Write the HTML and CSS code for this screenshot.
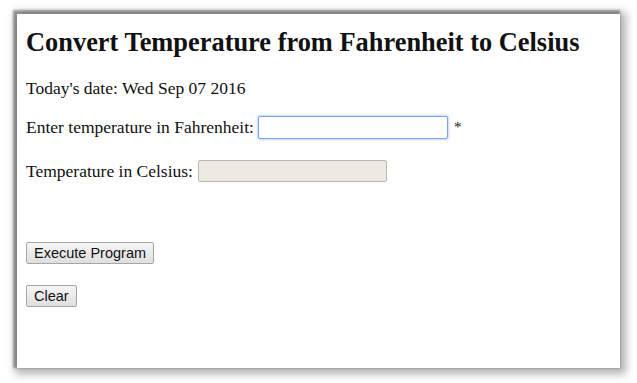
FILE: index.html
```html
<!DOCTYPE html>
<html lang="en">
<head>
  <meta charset="UTF-8" />
  <title>Convert Temperature</title>
  <link rel="stylesheet" href="styles.css">
</head>
<body>
<div class="frame">
  <div class="card">
    <h2>Convert Temperature from Fahrenheit to Celsius</h2>

    <p class="date">Today's date: <span id="fecha">Wed Sep 07 2016</span></p>

    <div class="row">
      <label for="fahrenheit">Enter temperature in Fahrenheit:</label>
      <input type="text" id="fahrenheit" class="entrada activa">
      <span class="req">*</span>
    </div>

    <div class="row row-celsius">
      <label for="celsius">Temperature in Celsius:</label>
      <input type="text" id="celsius" class="entrada" disabled>
    </div>

    <div class="botones">
      <button class="btn">Execute Program</button>
      <button class="btn">Clear</button>
    </div>
  </div>
</div>
</body>
</html>
```

FILE: styles.css
```css
body {
  margin: 0;
  background: #ffffff;
  font-family: "Liberation Serif", "Times New Roman", serif;
  font-size: 17.5px;
  color: #111;
}

.frame {
  padding: 14px 17px 15px 17px;
}

.card {
  height: 354px;
  padding: 0 9px;
  background: #ffffff;
  box-shadow: -2px -2px 2px 2px rgba(0,0,0,0.35), 2px 2px 8px 4px rgba(0,0,0,0.3);
  overflow: hidden;
}

h2 {
  margin: 13px 0 0;
  font-size: 26.4px;
  line-height: 30px;
  font-weight: bold;
}

.date {
  margin: 21px 0 0;
  line-height: 20px;
}

.row {
  display: flex;
  align-items: center;
  margin-top: 18px;
}

.row-celsius {
  margin-top: 21px;
}

.row label {
  margin-right: 4px;
}

.row-celsius label {
  margin-right: 5px;
}

.entrada {
  box-sizing: border-box;
  width: 190px;
  height: 23px;
  margin: 0;
  padding: 2px 4px;
  border: 1px solid #a9a9a9;
  border-radius: 2px;
  background: #fff;
  font-size: 14px;
}

.entrada.activa {
  border-color: #7ea3e6;
  box-shadow: 0 0 2px 1px rgba(126,163,230,0.45);
  outline: none;
}

.entrada:disabled {
  height: 22px;
  width: 189px;
  background: #ebebe4;
  border-color: #b8b8b0;
}

.req {
  margin-left: 6px;
  font-size: 15px;
}

.botones {
  display: flex;
  flex-direction: column;
  align-items: flex-start;
  gap: 21px;
  margin-top: 60px;
}

.btn {
  box-sizing: border-box;
  height: 22px;
  padding: 0 7px;
  font-family: "Liberation Sans", Arial, sans-serif;
  font-size: 14.5px;
  color: #111;
  border: 1px solid #a6a6a6;
  border-radius: 2px;
  background: linear-gradient(#f6f6f6, #dedede);
  cursor: pointer;
}
```
